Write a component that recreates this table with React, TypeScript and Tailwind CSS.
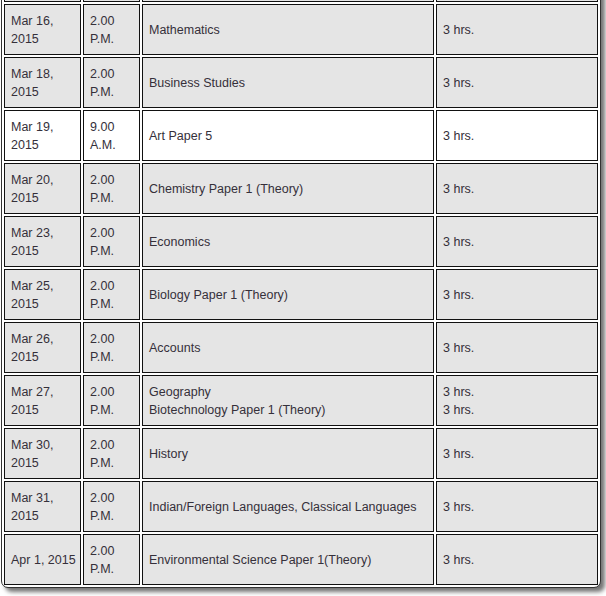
import React from "react";

type Row = { date: string; time: string; subjects: string[]; dur: string[]; white?: boolean; nowrap?: boolean };

const rows: Row[] = [
  { date: "", time: "", subjects: [], dur: [] },
  { date: "Mar 16, 2015", time: "2.00 P.M.", subjects: ["Mathematics"], dur: ["3 hrs."] },
  { date: "Mar 18, 2015", time: "2.00 P.M.", subjects: ["Business Studies"], dur: ["3 hrs."] },
  { date: "Mar 19, 2015", time: "9.00 A.M.", subjects: ["Art Paper 5"], dur: ["3 hrs."], white: true },
  { date: "Mar 20, 2015", time: "2.00 P.M.", subjects: ["Chemistry Paper 1 (Theory)"], dur: ["3 hrs."] },
  { date: "Mar 23, 2015", time: "2.00 P.M.", subjects: ["Economics"], dur: ["3 hrs."] },
  { date: "Mar 25, 2015", time: "2.00 P.M.", subjects: ["Biology Paper 1 (Theory)"], dur: ["3 hrs."] },
  { date: "Mar 26, 2015", time: "2.00 P.M.", subjects: ["Accounts"], dur: ["3 hrs."] },
  { date: "Mar 27, 2015", time: "2.00 P.M.", subjects: ["Geography", "Biotechnology Paper 1 (Theory)"], dur: ["3 hrs.", "3 hrs."] },
  { date: "Mar 30, 2015", time: "2.00 P.M.", subjects: ["History"], dur: ["3 hrs."] },
  { date: "Mar 31, 2015", time: "2.00 P.M.", subjects: ["Indian/Foreign Languages, Classical Languages"], dur: ["3 hrs."] },
  { date: "Apr 1, 2015", time: "2.00 P.M.", subjects: ["Environmental Science Paper 1(Theory)"], dur: ["3 hrs."], nowrap: true },
];

export default function App() {
  return (
    <div className="h-[596px] w-[606px] overflow-hidden bg-white" style={{ fontFamily: '"Liberation Sans", Arial, sans-serif' }}>
      <div className="ml-[1px] mt-[-52px] w-[600px] rounded-b-[7px] border border-[#333] bg-white shadow-[4px_4px_4px_rgba(0,0,0,0.55)]">
        <table className="w-[598px] table-fixed border-separate border-spacing-[2px] text-[12.5px] leading-[18px] text-[#35303a]">
          <colgroup>
            <col className="w-[77px]" />
            <col className="w-[57px]" />
            <col className="w-[292px]" />
            <col className="w-[162px]" />
          </colgroup>
          <tbody>
            {rows.map((r, i) => {
              const bg = r.white ? "bg-white" : "bg-[#e5e5e5]";
              const td = `border border-[#111] ${bg} px-[6px] align-middle h-[51px]`;
              return (
                <tr key={i}>
                  <td className={r.nowrap ? `${td} whitespace-nowrap` : td}>{r.date}</td>
                  <td className={td}>{r.time}</td>
                  <td className={td}>
                    {r.subjects.map((s, j) => (
                      <div key={j}>{s}</div>
                    ))}
                  </td>
                  <td className={td}>
                    {r.dur.map((s, j) => (
                      <div key={j}>{s}</div>
                    ))}
                  </td>
                </tr>
              );
            })}
          </tbody>
        </table>
      </div>
    </div>
  );
}
